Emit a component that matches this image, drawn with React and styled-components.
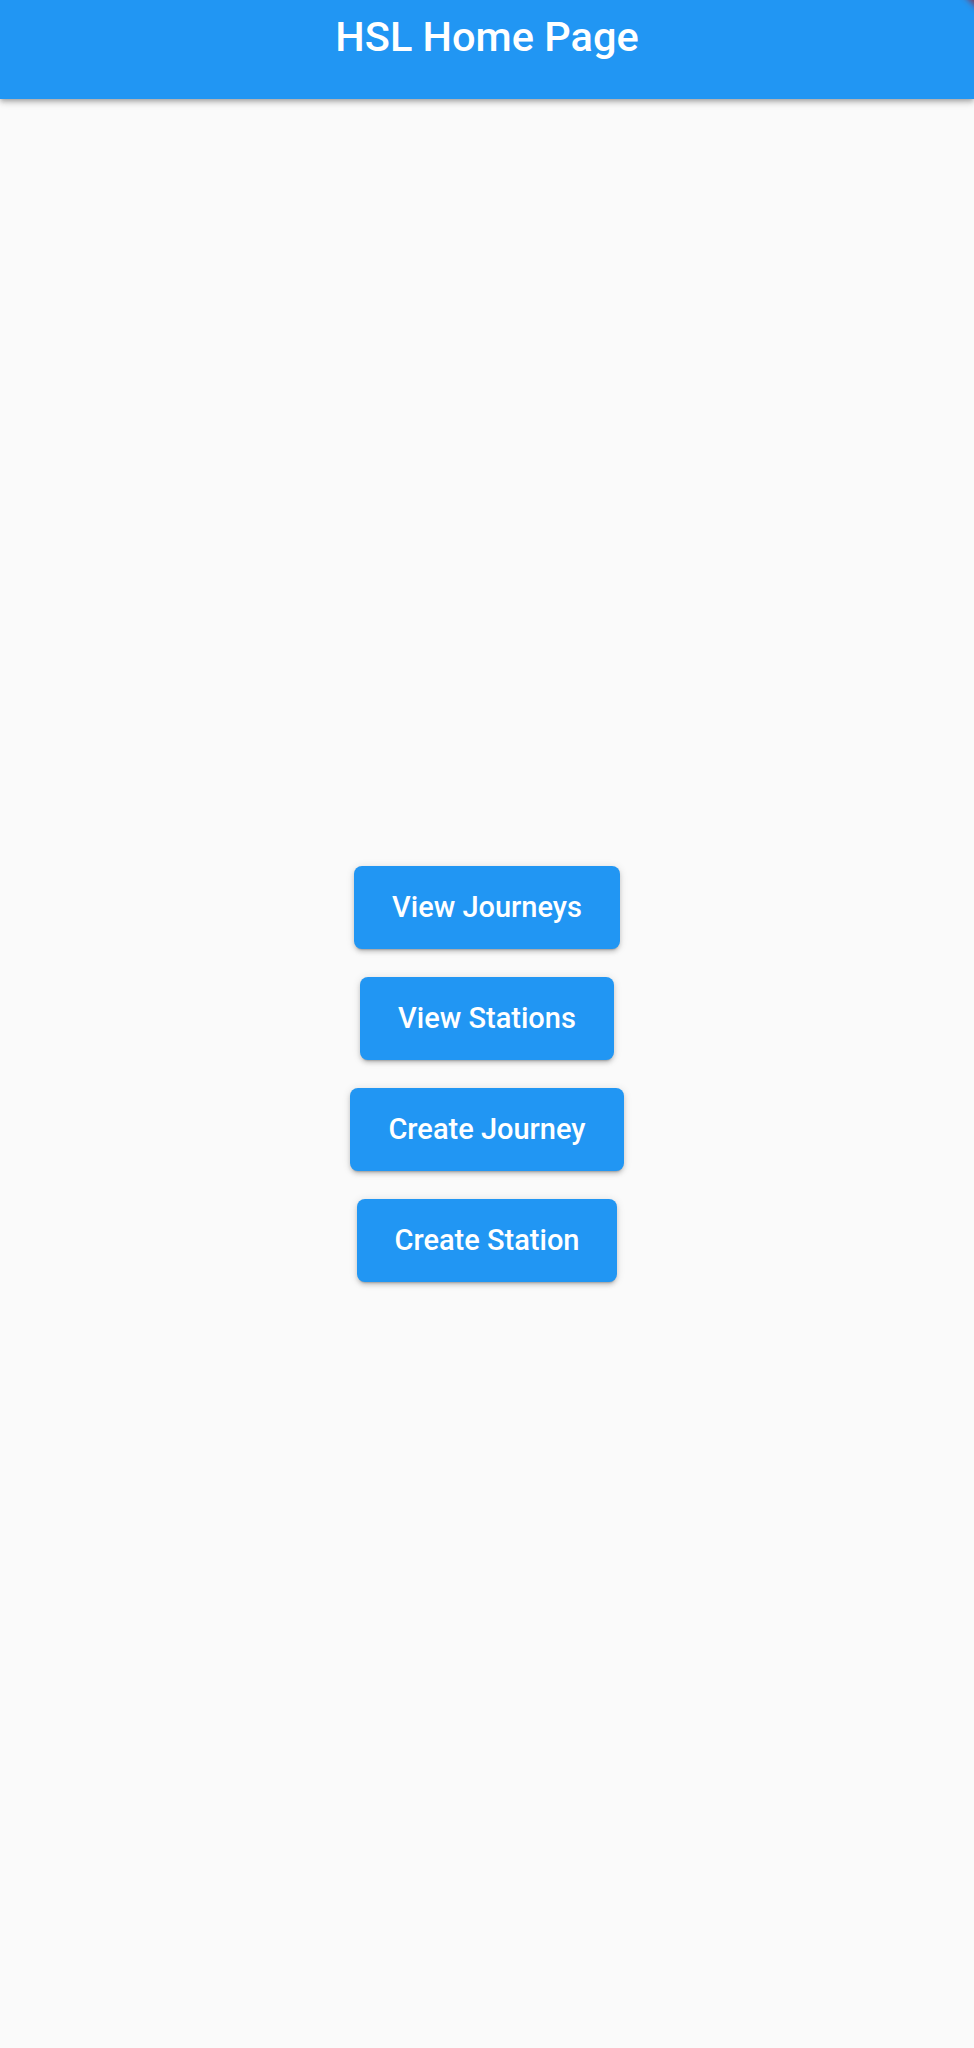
import styled, { createGlobalStyle } from "styled-components";

const GlobalStyle = createGlobalStyle`
    html, body {
        margin: 0;
        padding: 0;
        background: #fafafa;
        font-family: Roboto, "Noto Sans", "Liberation Sans", sans-serif;
    }
`

const buttons = ["View Journeys", "View Stations", "Create Journey", "Create Station"]

export default function App() {
    return (
        <>
            <GlobalStyle />
            <Page>
                <AppBar>
                    <Title>HSL Home Page</Title>
                    <CornerBanner />
                </AppBar>
                <Body>
                    <ButtonColumn>
                        {buttons.map(label => (
                            <MenuButton key={label}>{label}</MenuButton>
                        ))}
                    </ButtonColumn>
                </Body>
            </Page>
        </>
    )
}

const Page = styled.div`
    width: 974px;
    height: 2048px;
    display: flex;
    flex-direction: column;
    background: #fafafa;
    overflow: hidden;
`

const AppBar = styled.header`
    position: relative;
    z-index: 1;
    height: 99px;
    flex: none;
    background: #2196f3;
    display: flex;
    justify-content: center;
    align-items: flex-start;
    box-shadow: 0 2px 4px -1px rgba(0, 0, 0, 0.2),
        0 4px 5px 0 rgba(0, 0, 0, 0.14),
        0 1px 10px 0 rgba(0, 0, 0, 0.12);
    overflow: hidden;
`

const Title = styled.h1`
    margin: 0;
    padding-top: 12px;
    font-size: 41.5px;
    font-weight: 500;
    line-height: normal;
    color: #ffffff;
`

const CornerBanner = styled.div`
    position: absolute;
    top: -14px;
    right: -26px;
    width: 60px;
    height: 12px;
    background: rgba(160, 30, 40, 0.75);
    transform: rotate(45deg);
    filter: blur(3px);
`

const Body = styled.main`
    flex: 1;
    display: flex;
    align-items: center;
    justify-content: center;
`

const ButtonColumn = styled.div`
    display: flex;
    flex-direction: column;
    align-items: center;
    gap: 28px;
`

const MenuButton = styled.button`
    height: 83px;
    padding: 0 38px;
    border: none;
    border-radius: 8px;
    background: #2196f3;
    color: #ffffff;
    font-family: Roboto, "Noto Sans", "Liberation Sans", sans-serif;
    font-size: 29px;
    font-weight: 500;
    cursor: pointer;
    box-shadow: 0 3px 2px -2px rgba(0, 0, 0, 0.22),
        0 3px 4px 0 rgba(0, 0, 0, 0.14),
        0 1px 8px 0 rgba(0, 0, 0, 0.12);
`
